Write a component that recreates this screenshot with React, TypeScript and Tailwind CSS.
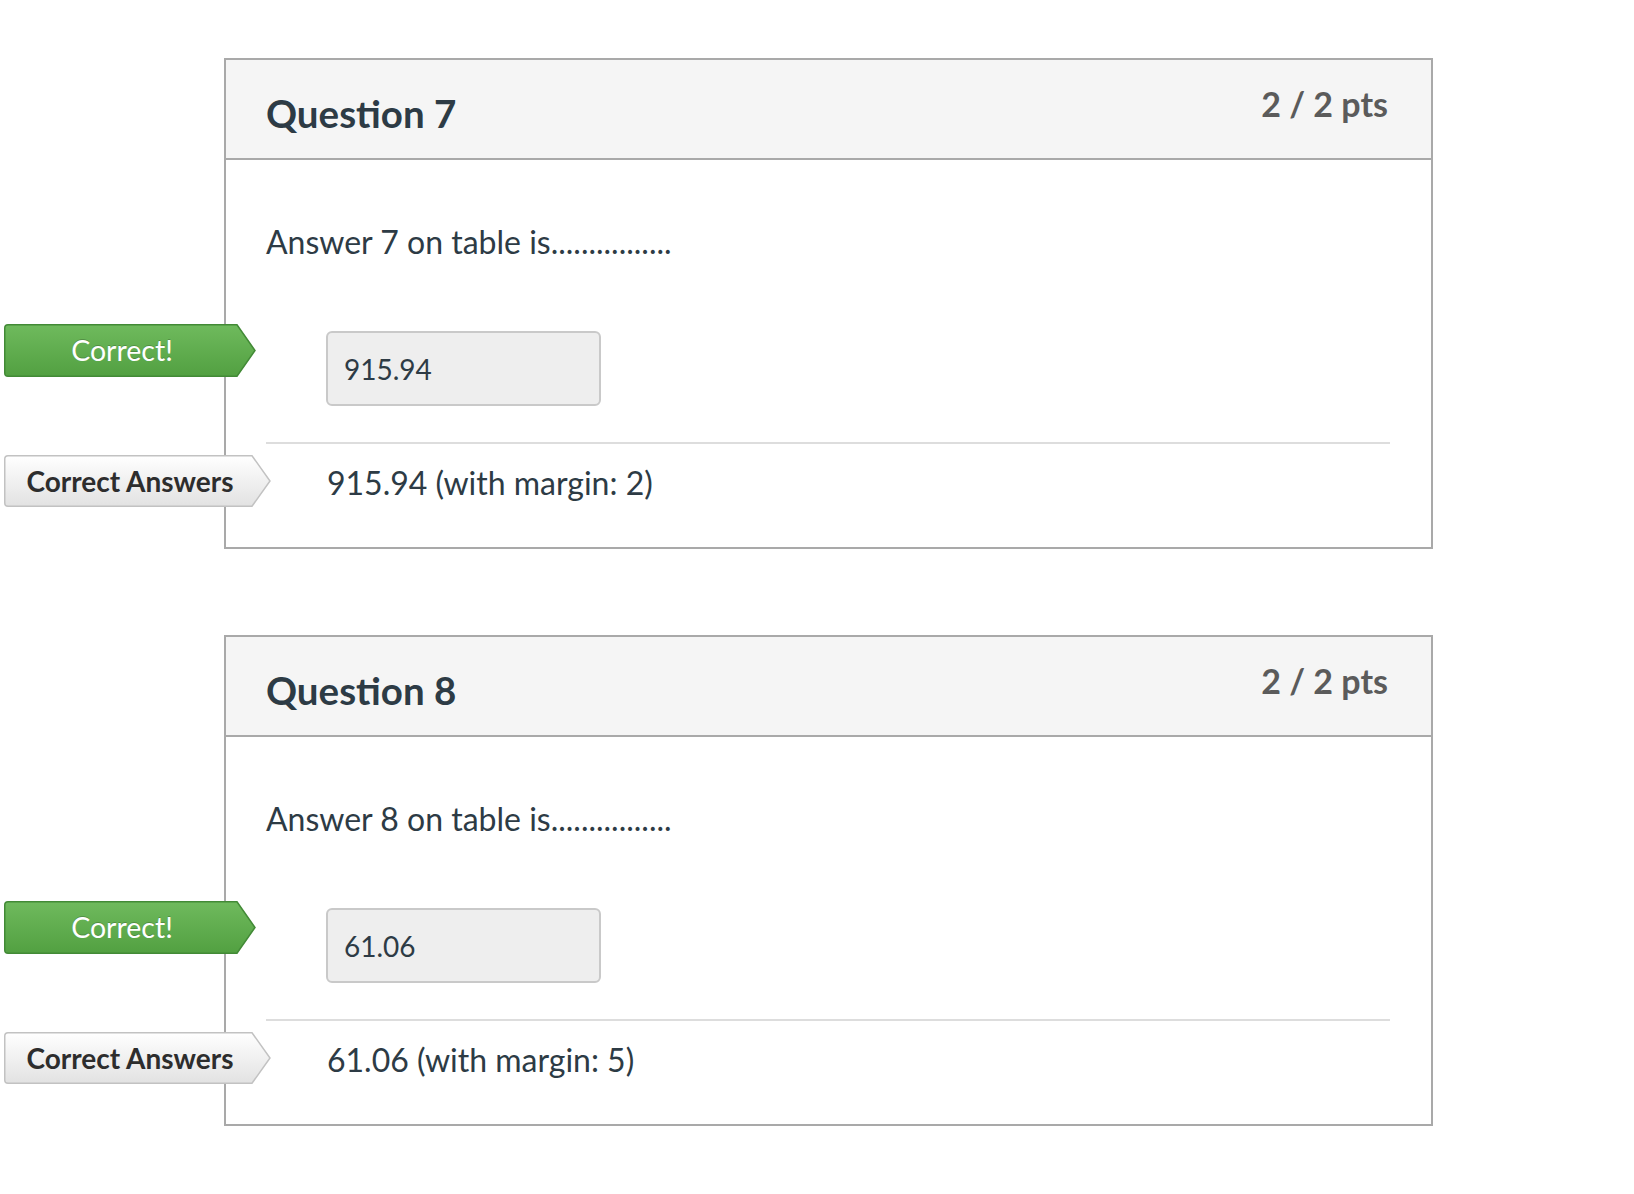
import React from 'react';

type Question = {
  number: number;
  prompt: string;
  given: string;
  correct: string;
};

const questions: Question[] = [
  { number: 7, prompt: 'Answer 7 on table is................', given: '915.94', correct: '915.94 (with margin: 2)' },
  { number: 8, prompt: 'Answer 8 on table is................', given: '61.06', correct: '61.06 (with margin: 5)' },
];

const font = { fontFamily: 'Lato, "Noto Sans", sans-serif' };

// arrow shaped label that hangs off the left edge of a question
const ArrowBadge: React.FC<{ variant: 'green' | 'gray'; label: string }> = ({ variant, label }) => {
  const green = variant === 'green';
  const w = green ? 252 : 267;
  const h = green ? 53 : 52;
  const body = green ? 233 : 248;
  const id = green ? 'grad-green' : 'grad-gray';
  return (
    <div
      className={`absolute flex items-center ${
        green ? 'top-[-7px] left-[-322px] w-[252px] h-[53px]' : 'top-[-4px] left-[-262px] w-[267px] h-[52px]'
      }`}
    >
      <svg className="absolute inset-0" width={w} height={h} viewBox={`0 0 ${w} ${h}`}>
        <defs>
          <linearGradient id={id} x1="0" y1="0" x2="0" y2="1">
            {green ? (
              <>
                <stop offset="0" stopColor="#6fba5d" />
                <stop offset="1" stopColor="#52a041" />
              </>
            ) : (
              <>
                <stop offset="0" stopColor="#ffffff" />
                <stop offset="1" stopColor="#e2e2e2" />
              </>
            )}
          </linearGradient>
        </defs>
        <path
          d={`M4 0.75 H${body} L${w - 1} ${h / 2} L${body} ${h - 0.75} H4 Q0.75 ${h - 0.75} 0.75 ${h - 4} V4 Q0.75 0.75 4 0.75 Z`}
          fill={`url(#${id})`}
          stroke={green ? '#428a36' : '#c2c2c2'}
          strokeWidth="1.5"
        />
      </svg>
      <span
        className={`relative text-center ${
          green
            ? 'w-[236px] text-white text-[28.5px] [text-shadow:0_-1px_0_rgba(0,0,0,0.2)]'
            : 'w-[250px] pl-[2px] text-[#2d2d2d] text-[28px] font-bold'
        }`}
        style={font}
      >
        {label}
      </span>
    </div>
  );
};

const QuestionCard: React.FC<{ q: Question }> = ({ q }) => (
  <div className="w-[1209px] border-2 border-[#a9a9a9] bg-white" style={font}>
    <div className="h-[100px] bg-[#f5f5f5] border-b-2 border-[#a9a9a9] flex justify-between items-start pl-[40px] pr-[43px]">
      <h2 className="pt-[30px] text-[38.5px] leading-[47px] font-bold text-[#2d3b45]">Question {q.number}</h2>
      <div className="pt-[23px] text-[34px] leading-[41px] font-bold text-[#5b5b5b]">2 / 2 pts</div>
    </div>
    <div className="pl-[40px] pr-[41px] pb-[40px]">
      <p className="mt-[58px] text-[32px] leading-[48px] text-[#2d3b45]">{q.prompt}</p>
      <div className="relative mt-[65px] ml-[60px] w-[275px] h-[75px]">
        <ArrowBadge variant="green" label="Correct!" />
        <div className="h-full w-full rounded-[6px] border-2 border-[#c9c9c9] bg-[#eeeeee] pl-[16px] flex items-center text-[28px] text-[#2d3b45]">
          {q.given}
        </div>
      </div>
      <div className="mt-[36px] h-[2px] bg-[#dddddd]" />
      <div className="relative mt-[15px] pl-[61px] text-[32px] leading-[48px] text-[#2d3b45]">
        <ArrowBadge variant="gray" label="Correct Answers" />
        {q.correct}
      </div>
    </div>
  </div>
);

export default function App() {
  return (
    <div className="min-h-screen bg-white pt-[58px] pl-[224px] flex flex-col gap-[86px]">
      {questions.map(q => (
        <QuestionCard key={q.number} q={q} />
      ))}
    </div>
  );
}
